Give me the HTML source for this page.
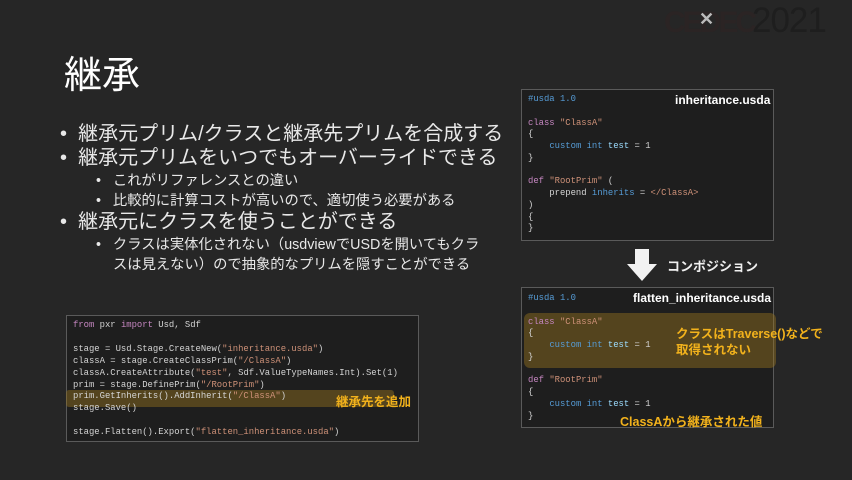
<!DOCTYPE html>
<html><head><meta charset="utf-8"><style>
*{margin:0;padding:0;box-sizing:border-box}
body{width:852px;height:480px;background:#262626;position:relative;overflow:hidden;font-family:"Liberation Sans","Noto Sans CJK JP",sans-serif;color:#e8e8e8}
.a{position:absolute;white-space:nowrap}
.box{position:absolute;background:#1e1e1e;border:1.5px solid #5a5a5a}
.code{font-family:"Liberation Mono","Noto Sans CJK JP",monospace;font-size:8.9px;color:#d4d4d4}
.b{color:#569cd6}.k{color:#c586c0}.s{color:#ce9178}.c{color:#9cdcfe}
.hl{position:absolute;background:rgba(150,115,30,0.45);border-radius:6px}
.or{color:#f2b21c;font-weight:bold}
.fn{font-weight:bold;color:#fff;font-size:12px}
</style></head><body>
<div class="a" style="left:664px;top:6px;font-size:30px;color:#2b2424;font-weight:bold;letter-spacing:-3px">CEDEC</div>
<div class="a" style="left:752px;top:1px;font-size:35px;color:#1e1e1e;letter-spacing:-1px">2021</div>
<div class="a" style="left:699px;top:9px;font-size:18px;color:#bbb;font-weight:bold">✕</div>

<div class="a" style="left:64px;top:44px;font-size:38px;color:#fff">継承</div>

<div class="a" style="left:60px;top:123px;font-size:20px;line-height:22px">•&nbsp; 継承元プリム/クラスと継承先プリムを合成する</div>
<div class="a" style="left:60px;top:147px;font-size:20px;line-height:22px">•&nbsp; 継承元プリムをいつでもオーバーライドできる</div>
<div class="a" style="left:96px;top:172px;font-size:14.3px;line-height:18px">•&nbsp;&nbsp; これがリファレンスとの違い</div>
<div class="a" style="left:96px;top:192px;font-size:14.3px;line-height:18px">•&nbsp;&nbsp; 比較的に計算コストが高いので、適切使う必要がある</div>
<div class="a" style="left:60px;top:211px;font-size:20px;line-height:22px">•&nbsp; 継承元にクラスを使うことができる</div>
<div class="a" style="left:96px;top:236px;font-size:14.3px;line-height:18px">•&nbsp;&nbsp; クラスは実体化されない（usdviewでUSDを開いてもクラ</div>
<div class="a" style="left:113px;top:256px;font-size:14.3px;line-height:18px">スは見えない）ので抽象的なプリムを隠すことができる</div>

<div class="box" style="left:521px;top:89px;width:253px;height:152px"></div>
<div class="a fn" style="left:675px;top:93px">inheritance.usda</div>
<div class="a code" style="left:528px;top:94px;line-height:11.75px">
<span class="b">#usda 1.0</span><br><br>
<span class="k">class</span> <span class="s">"ClassA"</span><br>{<br>
&nbsp;&nbsp;&nbsp;&nbsp;<span class="b">custom int</span> <span class="c">test</span> = 1<br>}<br><br>
<span class="k">def</span> <span class="s">"RootPrim"</span> (<br>
&nbsp;&nbsp;&nbsp;&nbsp;prepend <span class="b">inherits</span> = <span class="s">&lt;/ClassA&gt;</span><br>)<br>{<br>}</div>

<svg class="a" style="left:626px;top:248px" width="32" height="34"><path d="M9 1h14v15h8L16 33 1 16h8z" fill="#f2f2f2"/></svg>
<div class="a" style="left:667px;top:256px;font-size:13px;font-weight:bold;color:#f0f0f0">コンポジション</div>

<div class="box" style="left:521px;top:287px;width:253px;height:141px"></div>
<div class="hl" style="left:524px;top:313px;width:252px;height:55px"></div>
<div class="a fn" style="left:633px;top:291px">flatten_inheritance.usda</div>
<div class="a code" style="left:528px;top:293px;line-height:11.75px">
<span class="b">#usda 1.0</span><br><br>
<span class="k">class</span> <span class="s">"ClassA"</span><br>{<br>
&nbsp;&nbsp;&nbsp;&nbsp;<span class="b">custom int</span> <span class="c">test</span> = 1<br>}<br><br>
<span class="k">def</span> <span class="s">"RootPrim"</span><br>{<br>
&nbsp;&nbsp;&nbsp;&nbsp;<span class="b">custom int</span> <span class="c">test</span> = 1<br>}</div>
<div class="a or" style="left:676px;top:326px;font-size:12.5px;line-height:16px">クラスはTraverse()などで<br>取得されない</div>
<div class="a or" style="left:620px;top:411px;font-size:12.5px">ClassAから継承された値</div>

<div class="box" style="left:66px;top:315px;width:353px;height:127px"></div>
<div class="hl" style="left:66px;top:390px;width:328px;height:17px;border-radius:3px"></div>
<div class="a code" style="left:73px;top:320px;line-height:11.9px">
<span class="k">from</span> pxr <span class="k">import</span> Usd, Sdf<br><br>
stage = Usd.Stage.CreateNew(<span class="s">"inheritance.usda"</span>)<br>
classA = stage.CreateClassPrim(<span class="s">"/ClassA"</span>)<br>
classA.CreateAttribute(<span class="s">"test"</span>, Sdf.ValueTypeNames.Int).Set(1)<br>
prim = stage.DefinePrim(<span class="s">"/RootPrim"</span>)<br>
prim.GetInherits().AddInherit(<span class="s">"/ClassA"</span>)<br>
stage.Save()<br><br>
stage.Flatten().Export(<span class="s">"flatten_inheritance.usda"</span>)</div>
<div class="a or" style="left:336px;top:391px;font-size:12.5px">継承先を追加</div>
</body></html>
